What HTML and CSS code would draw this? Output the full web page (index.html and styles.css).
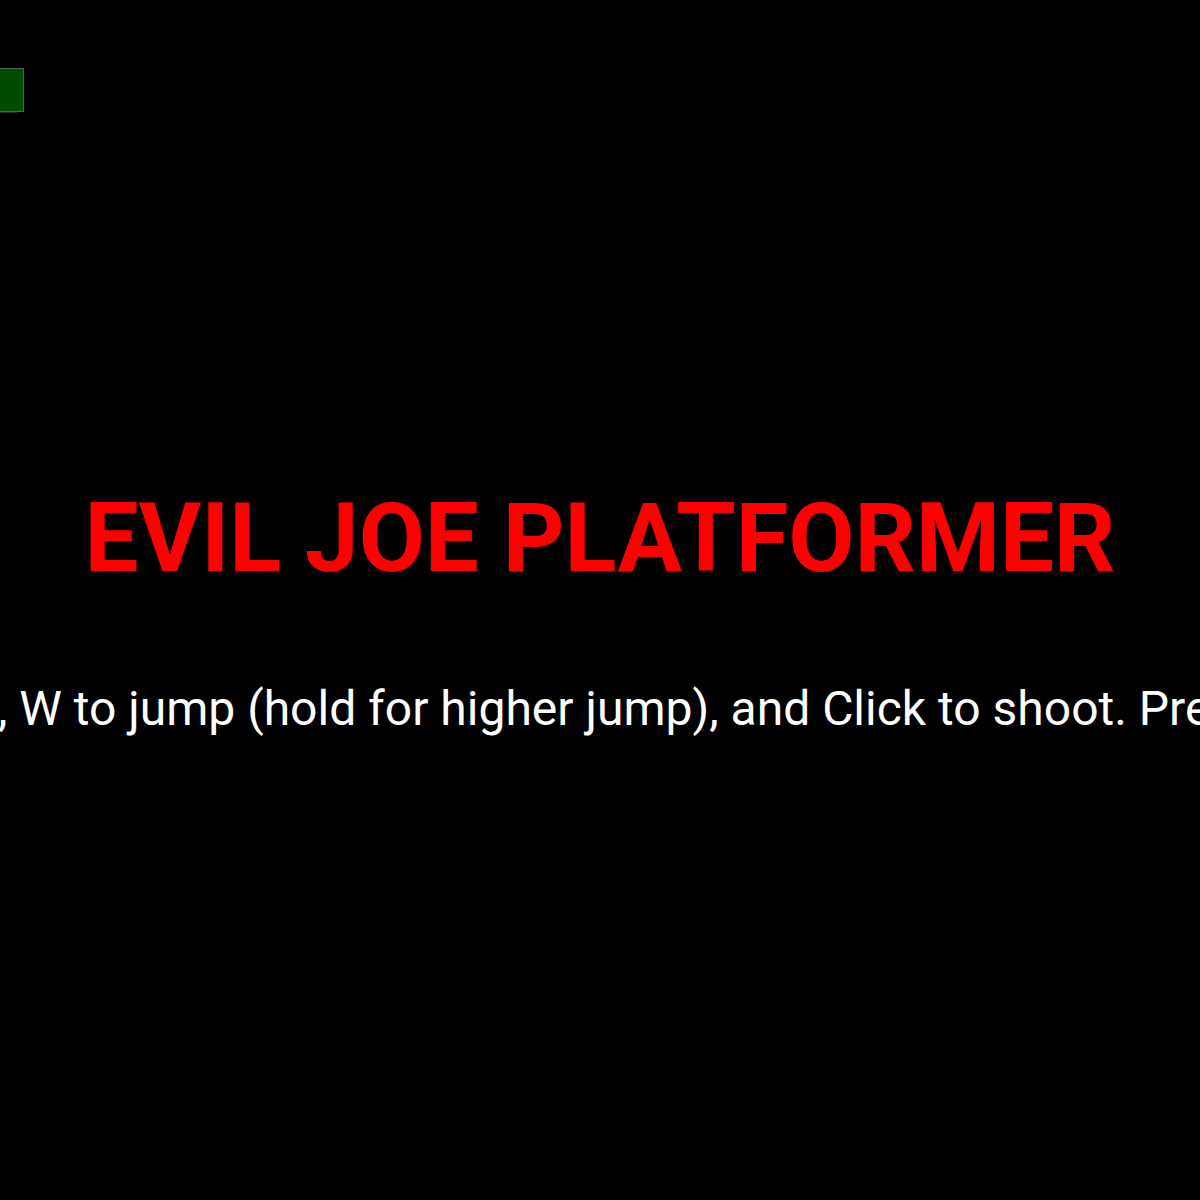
FILE: index.html
```html
<!DOCTYPE html>
<html>
<head>
<meta charset="utf-8">
<link rel="stylesheet" href="styles.css">
</head>
<body>
<div class="screen">
  <div class="player"></div>
  <div class="menu">
    <h1 class="title">EVIL JOE PLATFORMER</h1>
    <p class="help">Use A/D to move, W to jump (hold for higher jump), and Click to shoot. Press Enter to start.</p>
  </div>
</div>
</body>
</html>
```
FILE: styles.css
```css
html, body {
  margin: 0;
  padding: 0;
  background: #000;
  overflow: hidden;
}
.screen {
  position: relative;
  width: 1200px;
  height: 1200px;
  background: #000;
  overflow: hidden;
  font-family: Roboto, "Liberation Sans", sans-serif;
}
.player {
  position: absolute;
  left: -20px;
  top: 68px;
  width: 42px;
  height: 42px;
  background: #004d00;
  border: 1px solid #5a5a5a;
}
.player::after {
  content: "";
  position: absolute;
  left: 0;
  bottom: -2px;
  width: 36px;
  height: 1px;
  background: #2a2a2a;
}
.menu {
  display: flex;
  flex-direction: column;
  align-items: center;
  padding-top: 490px;
}
.title {
  margin: 0;
  font-size: 96px;
  line-height: 1;
  font-weight: 700;
  color: #ff0000;
  white-space: nowrap;
}
.help {
  margin: 99px 0 0 0;
  font-size: 48px;
  line-height: 1;
  font-weight: 400;
  color: #fff;
  white-space: nowrap;
}
```
